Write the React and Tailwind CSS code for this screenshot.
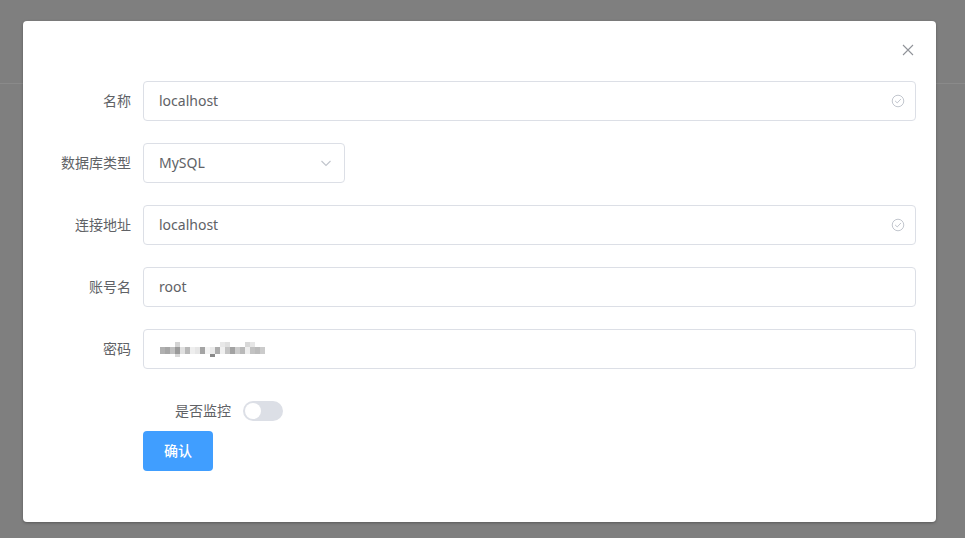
import React from 'react';

// pixelated (masked) password value, 5px cells
const pwCells = [
    ['', '', '', '#d4d4d4', '', '', '', '', '', '', '', '', '#e8e8e8', '#e0e0e0', '', '', '', '#d8d8d8', '#e6e6e6', '', ''],
    ['#b0b0b0', '#a6a6a6', '#c0c0c0', '#9a9a9a', '#e0e0e0', '#b8b8b8', '#eeeeee', '#e6e6e6', '#a4a4a4', '#f4f4f4', '#eaeaea', '#acacac', '#f0f0f0', '#c4c4c4', '#a2a2a2', '#cccccc', '#b9b9b9', '#eeeeee', '#c2c2c2', '#bbbbbb', '#cbcbcb'],
    ['', '', '', '#d8d8d8', '', '', '', '', '', '', '#8a8a8a', '', '', '', '', '', '', '', '', '', ''],
];
const rowHeights = ['h-[5px]', 'h-[7px]', 'h-[3px]'];

const CheckIcon = () => (
    <svg width="14" height="14" viewBox="0 0 16 16" fill="none" stroke="#c0c4cc" strokeWidth="1.1">
        <circle cx="8" cy="8" r="6.6" />
        <path d="M5 8.2l2.1 2 4-4.2" strokeLinecap="round" strokeLinejoin="round" />
    </svg>
);

const FormRow = ({ label, children }) => (
    <div className="flex h-10 mb-[22px]">
        <label className="w-[100px] shrink-0 pr-3 text-right text-sm leading-10 text-[#606266]">{label}</label>
        <div className="flex-1">{children}</div>
    </div>
);

const TextInput = ({ value, icon }) => (
    <div className="flex h-10 items-center rounded border border-[#dcdfe6] bg-white pl-[15px] pr-[10px] text-sm text-[#606266]">
        <span className="flex-1">{value}</span>
        {icon && <CheckIcon />}
    </div>
);

const App = () => {
    return (
        <div
            className="relative h-[538px] w-[965px] overflow-hidden bg-[#7f7f7f]"
            style={{ fontFamily: '"Noto Sans", "Noto Sans CJK SC", sans-serif' }}
        >
            {/* page behind the mask */}
            <div className="h-[84px] border-b border-[#8a8a8a]"></div>

            {/* Dialog */}
            <div className="absolute left-[23px] top-[21px] w-[913px] rounded-sm bg-white px-5 pb-[51px] pt-[60px] shadow-[0_1px_3px_rgba(0,0,0,0.3)]">
                <button className="absolute right-[22px] top-[23px] text-[#909399]">
                    <svg width="12" height="12" viewBox="0 0 12 12" stroke="currentColor" strokeWidth="1.1">
                        <path d="M1 1l10 10M11 1L1 11" />
                    </svg>
                </button>

                <FormRow label="名称">
                    <TextInput value="localhost" icon />
                </FormRow>

                <FormRow label="数据库类型">
                    <div className="flex h-10 w-[202px] items-center rounded border border-[#dcdfe6] pl-[15px] pr-[12px] text-sm text-[#606266]">
                        <span className="flex-1">MySQL</span>
                        <svg width="12" height="12" viewBox="0 0 12 12" fill="none" stroke="#c0c4cc" strokeWidth="1.1">
                            <path d="M1.5 4l4.5 4.5L10.5 4" />
                        </svg>
                    </div>
                </FormRow>

                <FormRow label="连接地址">
                    <TextInput value="localhost" icon />
                </FormRow>

                <FormRow label="账号名">
                    <TextInput value="root" />
                </FormRow>

                <FormRow label="密码">
                    <div className="flex h-10 items-center rounded border border-[#dcdfe6] pl-4">
                        <div className="flex flex-col">
                            {pwCells.map((row, r) => (
                                <div key={r} className="flex">
                                    {row.map((c, i) => (
                                        <span
                                            key={i}
                                            className={`block w-[5px] ${rowHeights[r]}`}
                                            style={{ background: c || 'transparent' }}
                                        ></span>
                                    ))}
                                </div>
                            ))}
                        </div>
                    </div>
                </FormRow>

                <div className="ml-[100px]">
                    <div className="flex h-10 items-center">
                        <label className="w-[100px] pr-3 text-right text-sm text-[#606266]">是否监控</label>
                        <span className="flex h-5 w-10 items-center rounded-full bg-[#dcdfe6] px-[2px]">
                            <span className="h-4 w-4 rounded-full bg-white"></span>
                        </span>
                    </div>
                    <button className="h-10 w-[70px] rounded bg-[#409eff] text-sm font-medium text-white">确认</button>
                </div>
            </div>
        </div>
    );
};

export default App;
